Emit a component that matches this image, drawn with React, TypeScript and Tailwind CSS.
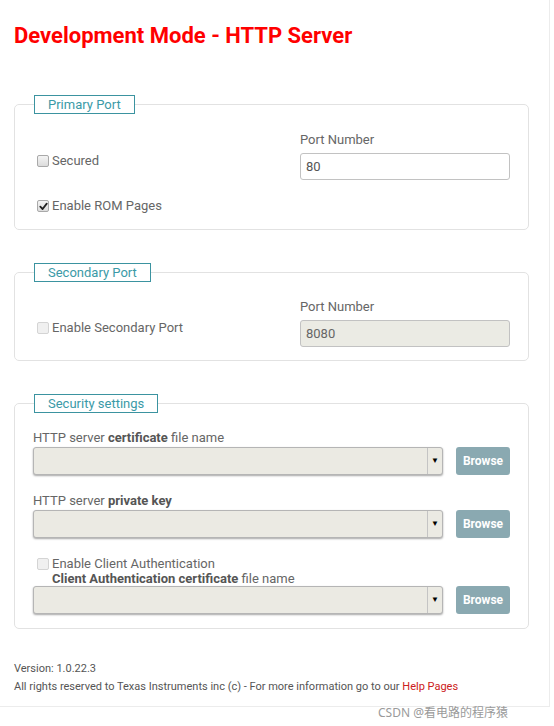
import React from "react";

function Checkbox({ checked = false, disabled = false }: { checked?: boolean; disabled?: boolean }) {
  return (
    <span
      className={
        "inline-flex items-center justify-center w-[12px] h-[12px] rounded-[2px] border shrink-0 " +
        (disabled ? "border-[#d4d4d4] bg-[#f0f0f0]" : "border-[#a9a9a9] bg-[linear-gradient(#f4f4f4,#dcdcdc)]")
      }
    >
      {checked && (
        <svg width="9" height="9" viewBox="0 0 10 10">
          <path d="M1.5 5.2 L4 7.8 L8.6 1.8" fill="none" stroke="#222" strokeWidth="2" strokeLinecap="round" strokeLinejoin="round" />
        </svg>
      )}
    </span>
  );
}

function Legend({ children }: { children: React.ReactNode }) {
  return (
    <legend className="ml-[1px] h-[19px] px-[13px] border border-[#3b93a0] text-[13px] leading-[17px] text-[#3b9aa7] bg-white">
      {children}
    </legend>
  );
}

function FileRow() {
  return (
    <div className="flex items-center">
      <div className="flex w-[410px] h-[28px] border border-[#b5b5b5] rounded-[3px] bg-[#ebeae3] shadow-[0_1px_2px_rgba(0,0,0,0.35)]">
        <div className="flex-1" />
        <div className="w-[15px] border-l border-[#c4c4c4] flex items-center justify-center text-[8px] text-black">▼</div>
      </div>
      <button className="ml-[13px] w-[54px] h-[28px] rounded-[3px] bg-[#8aa9b1] text-white text-[12px] font-bold">
        Browse
      </button>
    </div>
  );
}

export default function App() {
  return (
    <div className="bg-white" style={{ fontFamily: "Roboto, 'Liberation Sans', sans-serif" }}>
      <div className="w-[550px] h-[707px] border-r border-b border-[#ececec] pl-[14px] pr-[20px] text-[#666]">
        <h1 className="pt-[23px] text-[22px] leading-[26px] font-bold text-[#ff0000]">Development Mode - HTTP Server</h1>

        <fieldset className="mt-[46px] border border-[#e2e2e2] rounded-[5px] px-[18px] pb-[14px]">
          <Legend>Primary Port</Legend>
          <div className="flex">
            <div className="w-[267px] pl-[4px]">
              <div className="mt-[38px] flex items-center gap-[3px] h-[18px] text-[13px]">
                <Checkbox />
                <span>Secured</span>
              </div>
              <div className="mt-[27px] flex items-center gap-[3px] h-[18px] text-[13px]">
                <Checkbox checked />
                <span>Enable ROM Pages</span>
              </div>
            </div>
            <div className="w-[210px]">
              <div className="mt-[17px] text-[13px] leading-[18px]">Port Number</div>
              <div className="mt-[4px] h-[27px] border border-[#c2c2c2] rounded-[3px] px-[5px] flex items-center text-[13px] text-[#555]">80</div>
            </div>
          </div>
        </fieldset>

        <fieldset className="mt-[33px] border border-[#e2e2e2] rounded-[5px] px-[18px] pb-[13px]">
          <Legend>Secondary Port</Legend>
          <div className="flex">
            <div className="w-[267px] pl-[4px]">
              <div className="mt-[37px] flex items-center gap-[3px] h-[18px] text-[13px]">
                <Checkbox disabled />
                <span>Enable Secondary Port</span>
              </div>
            </div>
            <div className="w-[210px]">
              <div className="mt-[16px] text-[13px] leading-[18px]">Port Number</div>
              <div className="mt-[4px] h-[27px] border border-[#c2c2c2] rounded-[3px] px-[5px] flex items-center text-[13px] text-[#666] bg-[#ebebe4]">8080</div>
            </div>
          </div>
        </fieldset>

        <fieldset className="mt-[33px] border border-[#e2e2e2] rounded-[5px] px-[18px] pb-[14px]">
          <Legend>Security settings</Legend>
          <div className="mt-[16px] text-[13px] leading-[18px]">
            HTTP server <b className="text-[#555]">certificate</b> file name
          </div>
          <FileRow />
          <div className="mt-[17px] text-[13px] leading-[18px]">
            HTTP server <b className="text-[#555]">private key</b>
          </div>
          <FileRow />
          <div className="mt-[18px] pl-[4px] flex items-center gap-[3px] h-[15px] text-[13px]">
            <Checkbox disabled />
            <span>Enable Client Authentication</span>
          </div>
          <div className="pl-[19px] h-[15px] text-[13px] leading-[15px]">
            <b className="text-[#555]">Client Authentication certificate</b> file name
          </div>
          <FileRow />
        </fieldset>

        <div className="mt-[31px] text-[11px] leading-[18px] text-[#555]">Version: 1.0.22.3</div>
        <div className="text-[11px] leading-[18px] text-[#555]">
          All rights reserved to Texas Instruments inc (c) - For more information go to our{" "}
          <span className="text-[#cc2020]">Help Pages</span>
        </div>
      </div>
      <div className="w-[508px] text-right text-[12px] leading-[16px] text-[#9a9a9a] mt-[-2px]" style={{ fontFamily: "'Noto Sans', 'Noto Sans CJK SC', sans-serif" }}>
        CSDN @看电路的程序猿
      </div>
    </div>
  );
}
